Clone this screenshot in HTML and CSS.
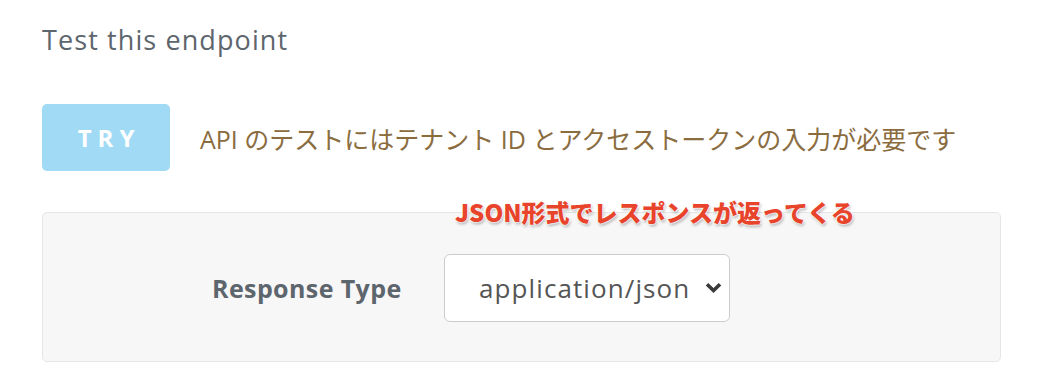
FILE: index.html
```html
<!DOCTYPE html>
<html lang="ja">
<head>
<meta charset="utf-8">
<title>Test this endpoint</title>
<link rel="stylesheet" href="styles.css">
</head>
<body>
<div class="page">
  <h2 class="title">Test this endpoint</h2>
  <div class="try-row">
    <button class="try-btn" type="button">TRY</button>
    <p class="notice">API のテストにはテナント ID とアクセストークンの入力が必要です</p>
  </div>
  <div class="panel">
    <span class="annotation">JSON形式でレスポンスが返ってくる</span>
    <div class="field">
      <label class="field-label" for="rtype">Response Type</label>
      <div class="select-wrap">
        <select id="rtype" class="select">
          <option>application/json</option>
        </select>
        <svg class="chevron" width="17" height="12" viewBox="0 0 17 12" aria-hidden="true">
          <path d="M2 2.2 L8.5 8.5 L15 2.2" fill="none" stroke="#3a3a3a" stroke-width="3.6" stroke-linecap="butt" stroke-linejoin="miter"/>
        </svg>
      </div>
    </div>
  </div>
</div>
</body>
</html>
```
FILE: styles.css
```css
html, body {
  margin: 0;
  padding: 0;
  background: #ffffff;
}
body {
  font-family: "Open Sans", "Noto Sans CJK JP", sans-serif;
}
.page {
  padding: 22px 43px 0 42px;
}
.title {
  margin: 0;
  font-size: 27px;
  font-weight: 400;
  letter-spacing: 1.1px;
  color: #5d656d;
  line-height: 36px;
}
.try-row {
  display: flex;
  align-items: center;
  margin-top: 46px;
}
.try-btn {
  width: 128px;
  height: 67px;
  border: none;
  border-radius: 5px;
  background: #a1daf4;
  color: #ffffff;
  font-family: "Open Sans", sans-serif;
  font-weight: 700;
  font-size: 24px;
  letter-spacing: 6px;
  padding: 0 0 0 6px;
}
.notice {
  margin: 0 0 0 30px;
  font-family: "Open Sans", "Noto Sans CJK JP", sans-serif;
  font-size: 25px;
  color: #8a6c3e;
}
.panel {
  position: relative;
  margin-top: 41px;
  height: 148px;
  background: #f7f7f7;
  border: 1px solid #e6e6e6;
  border-radius: 5px;
  display: flex;
  align-items: center;
}
.annotation {
  position: absolute;
  left: 412px;
  top: -16px;
  font-family: "Noto Sans CJK JP", sans-serif;
  font-weight: 900;
  font-size: 24px;
  line-height: 30px;
  color: #e8442b;
  text-shadow: 0 0 2px #fff, 0 0 2px #fff, 0 0 3px #fff, 1px 2px 3px rgba(0,0,0,0.35);
}
.field {
  display: flex;
  align-items: center;
  margin-left: 169px;
  margin-top: 2px;
}
.field-label {
  width: 232px;
  font-family: "Open Sans", sans-serif;
  font-weight: 700;
  font-size: 25px;
  letter-spacing: 0.4px;
  color: #5d656d;
}
.select-wrap {
  position: relative;
}
.select {
  appearance: none;
  -webkit-appearance: none;
  width: 286px;
  height: 68px;
  border: 1px solid #cccccc;
  border-radius: 6px;
  background: #ffffff;
  font-family: "Open Sans", sans-serif;
  font-size: 26px;
  letter-spacing: 1.1px;
  color: #555555;
  padding: 0 0 0 34px;
}
.chevron {
  position: absolute;
  right: 8px;
  top: 28px;
  pointer-events: none;
}
```
